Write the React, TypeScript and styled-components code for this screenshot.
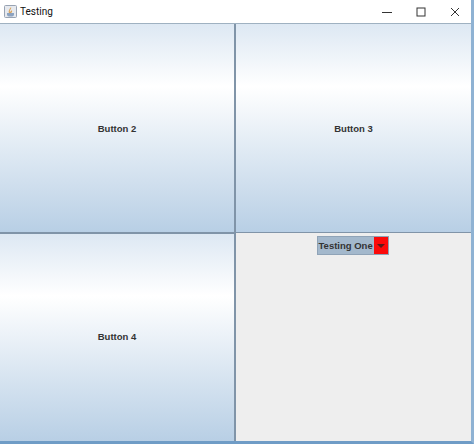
import React from 'react';
import styled, { createGlobalStyle } from 'styled-components';

const GlobalStyle = createGlobalStyle`
  html, body {
    margin: 0;
    padding: 0;
    background: #fff;
  }
`;

const Frame = styled.div`
  box-sizing: border-box;
  width: 474px;
  height: 444px;
  display: flex;
  flex-direction: column;
  border-right: 3px solid #8fb2d3;
  border-bottom: 3px solid #6f9cc6;
  font-family: 'Liberation Sans', Arial, sans-serif;
`;

const TitleBar = styled.div`
  box-sizing: border-box;
  height: 24px;
  flex: none;
  display: flex;
  align-items: center;
  padding-left: 4px;
  background: #fff;
  border-bottom: 1px solid #9fb1c1;
`;

const AppIcon = styled.svg`
  width: 13px;
  height: 13px;
  flex: none;
`;

const TitleText = styled.span`
  margin-left: 3px;
  font-family: Roboto, sans-serif;
  font-size: 10px;
  color: #111;
`;

const WindowControls = styled.div`
  margin-left: auto;
  margin-right: -1px;
  display: flex;
  align-items: center;
`;

const ControlButton = styled.div`
  width: 34px;
  height: 23px;
  display: flex;
  align-items: center;
  justify-content: center;
`;

const Grid = styled.div`
  flex: 1;
  min-height: 0;
  display: grid;
  grid-template-columns: 235px 236px;
  grid-template-rows: 209px 208px;
`;

const GradientButton = styled.button<{ $right?: boolean; $bottom?: boolean }>`
  box-sizing: border-box;
  margin: 0;
  padding: 0 0 ${(p) => (p.$bottom ? '2px' : '0')};
  border: solid #8094a8;
  border-width: ${(p) => (p.$bottom ? '1px' : '0')} ${(p) => (p.$right ? '0' : '1px')} ${(p) => (p.$bottom ? '0' : '1px')} ${(p) => (p.$right ? '1px' : '0')};
  background: linear-gradient(180deg, #dde8f3 0%, #ffffff 30%, #b8cfe5 100%);
  font-family: 'Liberation Sans', Arial, sans-serif;
  font-size: 9.5px;
  font-weight: bold;
  color: #333;
`;

const ComboCell = styled.div`
  box-sizing: border-box;
  background: #eeeeee;
  border-left: 1px solid #8094a8;
  display: flex;
  justify-content: center;
  align-items: flex-start;
  padding-top: 3px;
`;

const Combo = styled.div`
  display: flex;
  height: 19px;
  margin-right: 2px;
  border: 1px solid #8fa3b7;
  box-sizing: border-box;
`;

const ComboLabel = styled.div`
  width: 56px;
  box-sizing: border-box;
  padding-left: 1px;
  display: flex;
  align-items: center;
  background: #a3b8cc;
  font-size: 9.5px;
  font-weight: bold;
  color: #333;
  white-space: nowrap;
`;

const ComboArrow = styled.div`
  width: 14px;
  display: flex;
  align-items: center;
  justify-content: center;
  background: #fb0a0a;
`;

const Caret = styled.div`
  width: 0;
  height: 0;
  border-left: 4px solid transparent;
  border-right: 4px solid transparent;
  border-top: 4px solid #5a1a1a;
`;

export default function App() {
  return (
    <Frame>
      <GlobalStyle />
      <TitleBar>
        <AppIcon viewBox="0 0 13 13">
          <rect x="0.5" y="0.5" width="12" height="12" rx="1" fill="#e6e9ee" stroke="#98a3b3" />
          <path d="M7 2c1 2-2 3-1 5 .5-1 1.500-1 2-2 .5 2-.5 3-1 3H5C4 7 5 4 7 2z" fill="#dba35a" />
          <path d="M3 8h7v1.500c0 1-1 2-2 2H5c-1 0-2-1-2-2z" fill="#8ba2c0" />
        </AppIcon>
        <TitleText>Testing</TitleText>
        <WindowControls>
          <ControlButton>
            <svg width="10" height="10" viewBox="0 0 10 10">
              <path d="M0 5.500h10" stroke="#333" strokeWidth="1" />
            </svg>
          </ControlButton>
          <ControlButton>
            <svg width="10" height="10" viewBox="0 0 10 10">
              <rect x="1" y="1" width="8" height="8" fill="none" stroke="#333" strokeWidth="1" />
            </svg>
          </ControlButton>
          <ControlButton>
            <svg width="10" height="10" viewBox="0 0 10 10">
              <path d="M1 1l8 8M9 1l-8 8" stroke="#333" strokeWidth="1" />
            </svg>
          </ControlButton>
        </WindowControls>
      </TitleBar>
      <Grid>
        <GradientButton>Button 2</GradientButton>
        <GradientButton $right>Button 3</GradientButton>
        <GradientButton $bottom>Button 4</GradientButton>
        <ComboCell>
          <Combo>
            <ComboLabel>Testing One</ComboLabel>
            <ComboArrow>
              <Caret />
            </ComboArrow>
          </Combo>
        </ComboCell>
      </Grid>
    </Frame>
  );
}
